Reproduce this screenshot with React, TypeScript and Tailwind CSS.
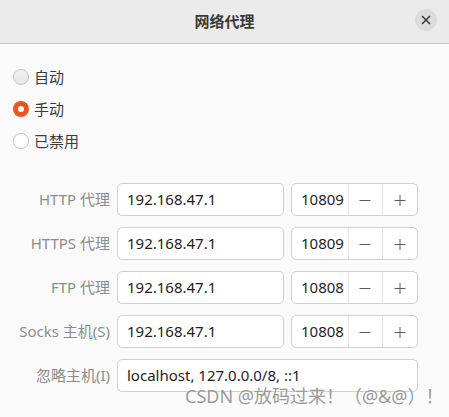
const rows = [
  { label: "HTTP 代理", host: "192.168.47.1", port: "10809" },
  { label: "HTTPS 代理", host: "192.168.47.1", port: "10809" },
  { label: "FTP 代理", host: "192.168.47.1", port: "10808" },
  { label: "Socks 主机(S)", host: "192.168.47.1", port: "10808" },
];

function Radio({ label, state }: { label: string; state: "hover" | "on" | "off" }) {
  return (
    <div className="flex h-[32px] items-center gap-[5px]">
      {state === "on" ? (
        <span className="flex h-[16px] w-[16px] items-center justify-center rounded-full bg-[#e95420]">
          <span className="h-[6px] w-[6px] rounded-full bg-white" />
        </span>
      ) : (
        <span
          className={
            state === "hover"
              ? "h-[16px] w-[16px] rounded-full border border-[#c4c4c4] bg-gradient-to-b from-[#f2f2f2] to-[#e8e8e8]"
              : "h-[16px] w-[16px] rounded-full border border-[#c4c4c4] bg-white"
          }
        />
      )}
      <span className="text-[15px] text-[#3c3c3c]">{label}</span>
    </div>
  );
}

function Spin({ value }: { value: string }) {
  return (
    <div className="ml-[7px] flex h-[33px] w-[127px] rounded-[5px] border border-[#cfcfcf] bg-white">
      <div className="flex w-[56px] items-center pl-[9px] text-[15px] text-[#1e1e1e]">{value}</div>
      <div className="flex w-[35px] items-center justify-center border-l border-[#e6e6e6]">
        <svg width="12" height="12" viewBox="0 0 12 12">
          <path d="M0.5 6.5h11" stroke="#5a5a5a" strokeWidth="1" />
        </svg>
      </div>
      <div className="flex w-[35px] items-center justify-center border-l border-[#e6e6e6]">
        <svg width="12" height="12" viewBox="0 0 12 12">
          <path d="M0.5 6.5h11M6 1v11" stroke="#5a5a5a" strokeWidth="1" />
        </svg>
      </div>
    </div>
  );
}

export default function App() {
  return (
    <div
      className="relative h-[417px] w-[449px] overflow-hidden bg-[#fafafa]"
      style={{ fontFamily: '"Noto Sans", "Noto Sans CJK SC", sans-serif' }}
    >
      {/* header bar */}
      <div className="relative flex h-[44px] items-center justify-center border-b border-[#c6c6c6] bg-[#ebebeb]">
        <span className="text-[15px] font-bold text-[#3a3a3a]">网络代理</span>
        <button className="absolute right-[12px] top-[9px] flex h-[22px] w-[22px] items-center justify-center rounded-full bg-[#dcdcdc]">
          <svg width="10" height="10" viewBox="0 0 10 10">
            <path d="M1 1l8 8M9 1l-8 8" stroke="#3a3a3a" strokeWidth="1.6" />
          </svg>
        </button>
      </div>

      {/* mode */}
      <div className="flex flex-col pl-[13px] pt-[17px]">
        <Radio label="自动" state="hover" />
        <Radio label="手动" state="on" />
        <Radio label="已禁用" state="off" />
      </div>

      {/* proxies */}
      <div className="mt-[26px] flex flex-col gap-[11px]">
        {rows.map((r) => (
          <div key={r.label} className="flex items-center">
            <div className="w-[110px] text-right text-[15px] text-[#8c8c8c]">{r.label}</div>
            <div className="ml-[7px] flex h-[33px] w-[167px] items-center rounded-[5px] border border-[#cfcfcf] bg-white pl-[9px] text-[15px] text-[#1e1e1e]">
              {r.host}
            </div>
            <Spin value={r.port} />
          </div>
        ))}
        <div className="flex items-center">
          <div className="w-[110px] text-right text-[15px] text-[#8c8c8c]">忽略主机(I)</div>
          <div className="ml-[7px] flex h-[33px] w-[301px] items-center rounded-[5px] border border-[#cfcfcf] bg-white pl-[9px] text-[15px] text-[#1e1e1e]">
            localhost, 127.0.0.0/8, ::1
          </div>
        </div>
      </div>

      {/* watermark */}
      <div
        className="absolute left-[185px] top-[387px] text-[18px] leading-none text-[#9a9a9a]"
        style={{ textShadow: "0 0 1px #fff" }}
      >
        CSDN @放码过来！（@&amp;@）！
      </div>
    </div>
  );
}
